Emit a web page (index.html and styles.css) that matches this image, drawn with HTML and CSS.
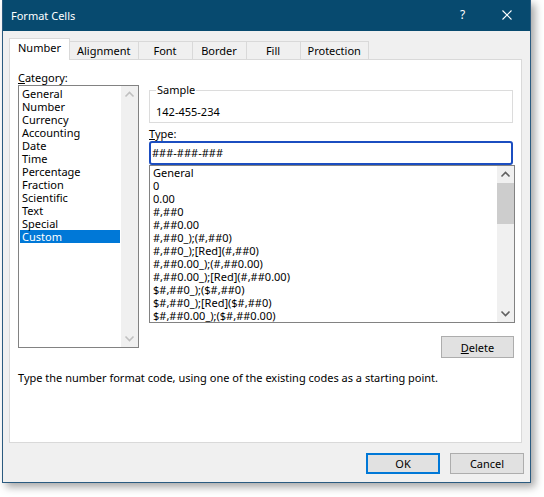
FILE: index.html
```html
<!DOCTYPE html>
<html lang="en">
<head>
    <meta charset="UTF-8">
    <meta name="viewport" content="width=device-width, initial-scale=1.0">
    <title>Format Cells</title>
    <link rel="stylesheet" href="styles.css">
</head>
<body>

    <div class="dialog">

        <!-- title bar -->
        <div class="titlebar">
            <span class="title">Format Cells</span>
            <span class="caption-btn help">?</span>
            <span class="caption-btn close">
                <svg width="10" height="10" viewBox="0 0 10 10">
                    <path d="M0.5 0.5 L9.5 9.5 M9.5 0.5 L0.5 9.5" stroke="#fff" stroke-width="1.1" fill="none" />
                </svg>
            </span>
        </div>

        <div class="dialog-body">

            <!-- tabs -->
            <div class="tabs">
                <div class="tab active">Number</div>
                <div class="tab">Alignment</div>
                <div class="tab">Font</div>
                <div class="tab">Border</div>
                <div class="tab">Fill</div>
                <div class="tab">Protection</div>
            </div>

            <div class="panel">
                <div class="panel-main">

                    <!-- category list -->
                    <div class="category">
                        <div class="label"><u>C</u>ategory:</div>
                        <div class="listbox category-list">
                            <ul class="items">
                                <li>General</li>
                                <li>Number</li>
                                <li>Currency</li>
                                <li>Accounting</li>
                                <li>Date</li>
                                <li>Time</li>
                                <li>Percentage</li>
                                <li>Fraction</li>
                                <li>Scientific</li>
                                <li>Text</li>
                                <li>Special</li>
                                <li class="selected">Custom</li>
                            </ul>
                            <div class="scrollbar disabled">
                                <span class="arrow">
                                    <svg width="17" height="17" viewBox="0 0 17 17"><polyline points="4.5,10.5 8.5,6.5 12.5,10.5" /></svg>
                                </span>
                                <span class="track"></span>
                                <span class="arrow">
                                    <svg width="17" height="17" viewBox="0 0 17 17"><polyline points="4.5,6.5 8.5,10.5 12.5,6.5" /></svg>
                                </span>
                            </div>
                        </div>
                    </div>

                    <!-- format code -->
                    <div class="format">
                        <fieldset class="sample">
                            <legend>Sample</legend>
                            <div class="sample-value">142-455-234</div>
                        </fieldset>

                        <div class="label type-label"><u>T</u>ype:</div>
                        <input class="type-input" type="text" value="###-###-###">

                        <div class="listbox type-list">
                            <ul class="items">
                                <li>General</li>
                                <li>0</li>
                                <li>0.00</li>
                                <li>#,##0</li>
                                <li>#,##0.00</li>
                                <li>#,##0_);(#,##0)</li>
                                <li>#,##0_);[Red](#,##0)</li>
                                <li>#,##0.00_);(#,##0.00)</li>
                                <li>#,##0.00_);[Red](#,##0.00)</li>
                                <li>$#,##0_);($#,##0)</li>
                                <li>$#,##0_);[Red]($#,##0)</li>
                                <li>$#,##0.00_);($#,##0.00)</li>
                            </ul>
                            <div class="scrollbar">
                                <span class="arrow">
                                    <svg width="17" height="17" viewBox="0 0 17 17"><polyline points="4.5,10.5 8.5,6.5 12.5,10.5" /></svg>
                                </span>
                                <span class="track"><span class="thumb"></span></span>
                                <span class="arrow">
                                    <svg width="17" height="17" viewBox="0 0 17 17"><polyline points="4.5,6.5 8.5,10.5 12.5,6.5" /></svg>
                                </span>
                            </div>
                        </div>

                        <div class="delete-row">
                            <button class="btn delete"><u>D</u>elete</button>
                        </div>
                    </div>
                </div>

                <p class="hint">Type the number format code, using one of the existing codes as a starting point.</p>
            </div>

            <!-- dialog buttons -->
            <div class="footer">
                <button class="btn default">OK</button>
                <button class="btn">Cancel</button>
            </div>
        </div>
    </div>

</body>
</html>
```

FILE: styles.css
```css
/* page */
* {
    box-sizing: border-box;
}

body {
    margin: 0;
    width: 544px;
    height: 497px;
    overflow: hidden;
    background-color: #fff;
    font-family: 'Noto Sans', sans-serif;
    font-size: 11px;
    color: #000;
}

/* window frame */
.dialog {
    width: 529px;
    height: 483px;
    margin-left: 2px;
    display: flex;
    flex-direction: column;
    background-color: #f0f0f0;
    border: 1px solid #2b5b80;
    border-top: none;
    box-shadow: 4px 4px 8px rgba(0, 0, 0, 0.35);
}

.titlebar {
    height: 31px;
    flex: none;
    display: flex;
    align-items: center;
    padding-left: 8px;
    background-color: #074a6f;
    color: #fff;
}

.title {
    flex: 1;
    padding-bottom: 1px;
}

.caption-btn {
    width: 46px;
    height: 31px;
    display: flex;
    align-items: center;
    justify-content: center;
}

.help {
    font-size: 12px;
    padding: 0 0 2px 3px;
}

.close svg {
    display: block;
    margin-bottom: 2px;
}

.dialog-body {
    flex: 1;
    display: flex;
    flex-direction: column;
    padding: 7px 8px 8px 6px;
}

/* tabs */
.tabs {
    height: 22px;
    display: flex;
    align-items: flex-end;
    position: relative;
    z-index: 1;
    margin-bottom: -1px;
}

.tab {
    height: 18px;
    min-width: 55px;
    margin-bottom: 1px;
    margin-left: -1px;
    padding: 1px 7px 0;
    text-align: center;
    line-height: 16px;
    background-color: #f0f0f0;
    border: 1px solid #d9d9d9;
    border-bottom: none;
}

.tab.active {
    height: 22px;
    margin-left: 0;
    margin-bottom: 0;
    padding: 0 8px 4px;
    line-height: 17px;
    background-color: #fff;
    position: relative;
    z-index: 2;
}

/* tab page */
.panel {
    height: 384px;
    flex: none;
    padding: 10px 6px 0 8px;
    background-color: #fff;
    border: 1px solid #d9d9d9;
}

.panel-main {
    display: flex;
    gap: 10px;
    align-items: flex-start;
}

.label {
    line-height: 15px;
}

.category {
    width: 121px;
}

/* list boxes */
.listbox {
    display: flex;
    border: 1px solid #828282;
    background-color: #fff;
    overflow: hidden;
}

.items {
    flex: 1;
    margin: 0;
    padding: 1px 1px 0;
    list-style: none;
    overflow: hidden;
}

.items li {
    height: 13px;
    line-height: 13px;
    padding-left: 2px;
    white-space: nowrap;
}

.items li.selected {
    background-color: #0078d7;
    color: #fff;
}

.category-list {
    height: 263px;
}

.scrollbar {
    width: 17px;
    flex: none;
    display: flex;
    flex-direction: column;
    background-color: #f0f0f0;
}

.scrollbar .arrow {
    height: 17px;
    flex: none;
}

.scrollbar svg {
    display: block;
}

.scrollbar polyline {
    fill: none;
    stroke: #606060;
    stroke-width: 1.6;
}

.scrollbar.disabled polyline {
    stroke: #c0c0c0;
}

.track {
    flex: 1;
}

.thumb {
    display: block;
    height: 41px;
    background-color: #cdcdcd;
}

/* format column */
.format {
    width: 366px;
    display: flex;
    flex-direction: column;
}

.sample {
    margin: 13px 2px 0 0;
    padding: 0 6px 3px;
    border: 1px solid #dcdcdc;
}

.sample legend {
    padding: 0 1px;
    line-height: 14px;
}

.sample-value {
    margin-top: 8px;
    line-height: 14px;
}

.type-label {
    margin-top: 3px;
}

.type-input {
    width: 364px;
    height: 24px;
    margin: 0;
    padding: 0 0 1px 1px;
    font-family: inherit;
    font-size: 11px;
    color: #000;
    background-color: #fff;
    border: 2px solid #1b4dc0;
    border-radius: 3px;
    outline: none;
}

.type-list {
    height: 158px;
}

.type-list .items {
    padding: 0 0 0 1px;
}

.delete-row {
    margin-top: 13px;
    padding-right: 1px;
    display: flex;
    justify-content: flex-end;
}

/* buttons */
.btn {
    width: 74px;
    height: 21px;
    padding: 0;
    font-family: inherit;
    font-size: 11px;
    color: #000;
    background-color: #e1e1e1;
    border: 1px solid #adadad;
}

.btn.delete {
    width: 73px;
    height: 22px;
}

.btn.default {
    border: 2px solid #0078d7;
}

.hint {
    margin: 13px 0 0;
    line-height: 14px;
}

.footer {
    margin: 10px -2px 0 0;
    display: flex;
    justify-content: flex-end;
    gap: 10px;
}
```
